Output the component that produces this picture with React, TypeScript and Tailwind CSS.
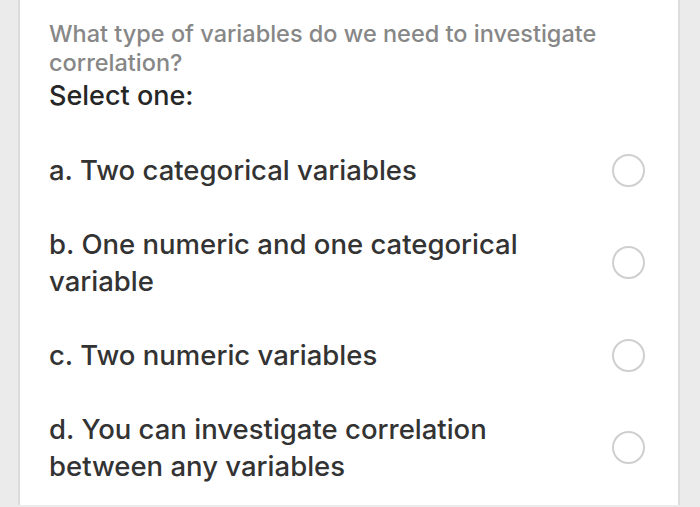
const options = [
  "a. Two categorical variables",
  "b. One numeric and one categorical variable",
  "c. Two numeric variables",
  "d. You can investigate correlation between any variables",
];

export default function App() {
  return (
    <div className="w-[700px] h-[507px] bg-[#ebebeb] overflow-hidden" style={{ fontFamily: "Inter, 'Noto Sans', sans-serif" }}>
      <div className="ml-[18px] w-[662px] h-[505px] bg-white border-l-2 border-r-2 border-[#dcdcdc] pl-[29px] pr-[33px] pt-[19px]">
        <p className="text-[23.5px] leading-[29px] font-medium text-[#878787] pr-[20px]">
          What type of variables do we need to investigate correlation?
        </p>
        <p className="text-[27px] leading-[36px] font-medium text-[#262626] mt-[1px]">Select one:</p>

        <div className="mt-[19px]">
          {options.map((opt) => (
            <div key={opt} className="flex items-center justify-between py-[18.5px]">
              <span className="text-[27.5px] leading-[37px] font-medium text-[#333333] max-w-[500px]">{opt}</span>
              <span className="w-[33px] h-[33px] rounded-full border-2 border-[#cfcfcf] shrink-0" />
            </div>
          ))}
        </div>
      </div>
    </div>
  );
}
